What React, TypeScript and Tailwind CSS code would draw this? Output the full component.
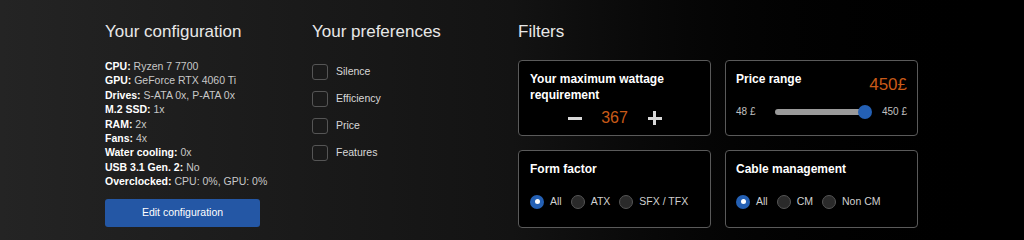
import { useState } from "react";

const config: [string, string][] = [
  ["CPU:", "Ryzen 7 7700"],
  ["GPU:", "GeForce RTX 4060 Ti"],
  ["Drives:", "S-ATA 0x, P-ATA 0x"],
  ["M.2 SSD:", "1x"],
  ["RAM:", "2x"],
  ["Fans:", "4x"],
  ["Water cooling:", "0x"],
  ["USB 3.1 Gen. 2:", "No"],
  ["Overclocked:", "CPU: 0%, GPU: 0%"],
];

const prefs = ["Silence", "Efficiency", "Price", "Features"];

const Radio = ({ label, checked }: { label: string; checked?: boolean }) => (
  <label className="flex items-center gap-[6px] mr-[9px] whitespace-nowrap">
    {checked ? (
      <span className="w-[14px] h-[14px] rounded-full bg-[#2460b4] flex items-center justify-center">
        <span className="w-[5px] h-[5px] rounded-full bg-white" />
      </span>
    ) : (
      <span className="w-[14px] h-[14px] rounded-full bg-[#2a2a2a] border border-[#555]" />
    )}
    <span className="text-[10.5px] text-[#d0d0d0]">{label}</span>
  </label>
);

export default function App() {
  const [wattage, setWattage] = useState(367);

  return (
    <div
      className="w-[1024px] h-[240px] overflow-hidden bg-gradient-to-r from-[#242424] via-[#131313] to-black text-white flex pl-[105px] pt-[21px]"
      style={{ fontFamily: '"Liberation Sans", Arial, sans-serif' }}
    >
      {/* Configuration */}
      <div className="w-[207px] flex flex-col">
        <h2 className="text-[17px] text-[#e8e8e8] leading-[22px]">Your configuration</h2>
        <ul className="mt-[16px] text-[10.5px] leading-[14.4px]">
          {config.map(([k, v]) => (
            <li key={k}>
              <span className="font-bold text-white">{k}</span>{" "}
              <span className="text-[#c8c8c8]">{v}</span>
            </li>
          ))}
        </ul>
        <button className="mt-[10px] w-[155px] h-[28px] rounded-[3px] bg-[#2457a5] text-[10.5px] text-white">
          Edit configuration
        </button>
      </div>

      {/* Preferences */}
      <div className="w-[206px] flex flex-col">
        <h2 className="text-[17px] text-[#e8e8e8] leading-[22px]">Your preferences</h2>
        <div className="mt-[21px] flex flex-col gap-[11px]">
          {prefs.map((p) => (
            <label key={p} className="flex items-center gap-[8px]">
              <span className="w-[16px] h-[16px] rounded-[3px] border border-[#555] bg-[#1a1a1a]" />
              <span className="text-[10.5px] text-[#d8d8d8]">{p}</span>
            </label>
          ))}
        </div>
      </div>

      {/* Filters */}
      <div className="flex flex-col">
        <h2 className="text-[17px] text-[#e8e8e8] leading-[22px]">Filters</h2>
        <div className="mt-[17px] grid grid-cols-[193px_193px] gap-[14px]">
          <div className="h-[76px] bg-black border border-[#5a5a5a] rounded-[4px] px-[11px] pt-[10px]">
            <div className="text-[12px] font-bold leading-[16px]">Your maximum wattage requirement</div>
            <div className="flex items-center justify-center gap-[18px] mt-[3px]">
              <button onClick={() => setWattage(wattage - 1)} className="w-[14px] h-[3px] bg-[#d8d8d8]" />
              <span className="text-[16px] text-[#c85a18] w-[30px] text-center">{wattage}</span>
              <button onClick={() => setWattage(wattage + 1)} className="relative w-[14px] h-[14px]">
                <span className="absolute left-0 top-[5.5px] w-[14px] h-[3px] bg-[#d8d8d8]" />
                <span className="absolute top-0 left-[5.5px] w-[3px] h-[14px] bg-[#d8d8d8]" />
              </button>
            </div>
          </div>

          <div className="h-[76px] bg-black border border-[#5a5a5a] rounded-[4px] px-[10px] pt-[10px]">
            <div className="flex justify-between items-start">
              <div className="text-[12px] font-bold leading-[16px]">Price range</div>
              <div className="text-[17px] text-[#c85a18] leading-[20px] mt-[4px]">450£</div>
            </div>
            <div className="flex items-center mt-[9px]">
              <span className="text-[10px] text-[#c0c0c0] w-[39px]">48 £</span>
              <div className="relative w-[91px] h-[6px] rounded-full bg-[#9a9a9a]">
                <span className="absolute right-[-6px] top-[-4px] w-[14px] h-[14px] rounded-full bg-[#2460b4]" />
              </div>
              <span className="text-[10px] text-[#c0c0c0] ml-auto">450 £</span>
            </div>
          </div>

          <div className="h-[78px] bg-black border border-[#5a5a5a] rounded-[4px] px-[11px] pt-[10px]">
            <div className="text-[12px] font-bold leading-[16px]">Form factor</div>
            <div className="flex items-center mt-[17px]">
              <Radio label="All" checked />
              <Radio label="ATX" />
              <Radio label="SFX / TFX" />
            </div>
          </div>

          <div className="h-[78px] bg-black border border-[#5a5a5a] rounded-[4px] px-[10px] pt-[10px]">
            <div className="text-[12px] font-bold leading-[16px]">Cable management</div>
            <div className="flex items-center mt-[17px]">
              <Radio label="All" checked />
              <Radio label="CM" />
              <Radio label="Non CM" />
            </div>
          </div>
        </div>
      </div>
    </div>
  );
}
